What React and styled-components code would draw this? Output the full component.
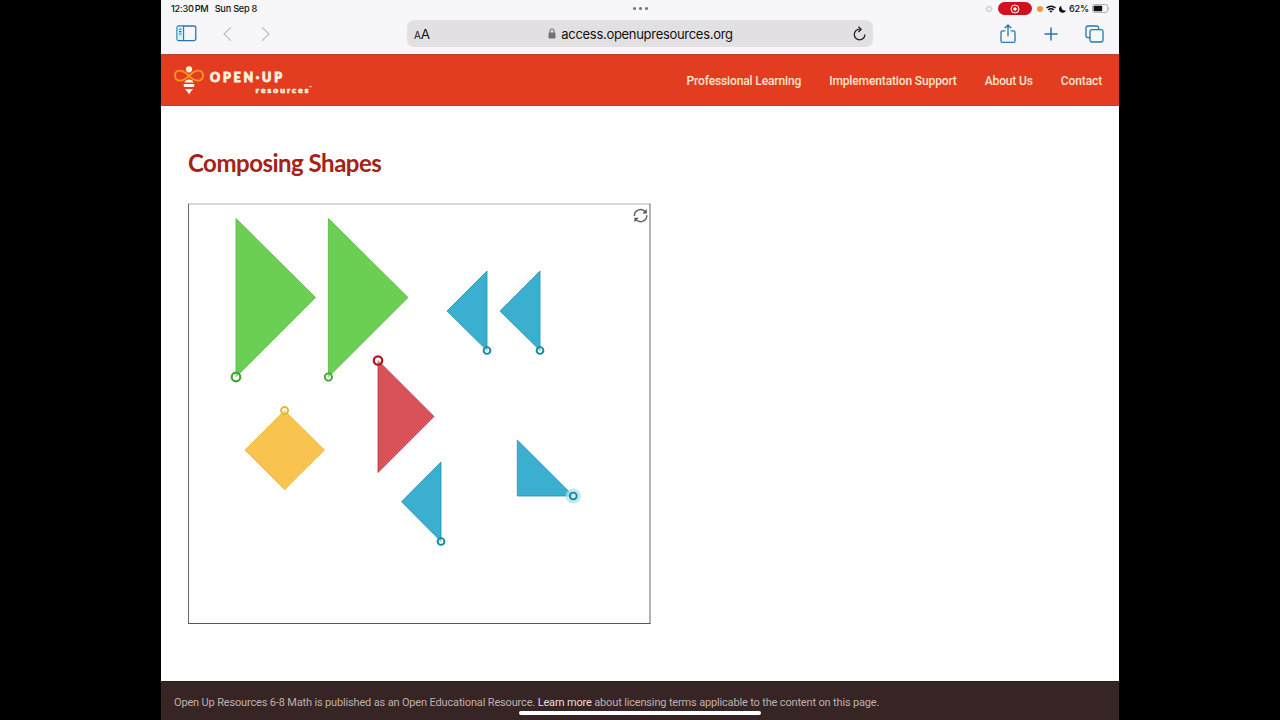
import React from 'react';
import styled, { createGlobalStyle } from 'styled-components';

const GlobalStyle = createGlobalStyle`
  * { box-sizing: border-box; }
  body { margin: 0; background: #000; overflow: hidden; }
  svg { display: block; flex: none; }
`;

const Letterbox = styled.div`
  display: flex;
  height: 720px;
  padding: 0 161px;
  background: #000;
`;

const Tablet = styled.div`
  display: flex;
  flex-direction: column;
  width: 958px;
  height: 720px;
  background: #fffefe;
  font-family: Roboto, "Liberation Sans", sans-serif;
`;

const Chrome = styled.div`
  height: 54px;
  background: #f7f6f9;
  color: #111;
  font-family: Inter, "Liberation Sans", sans-serif;
`;

const StatusBar = styled.div`
  display: grid;
  grid-template-columns: 1fr auto 1fr;
  align-items: center;
  height: 17px;
  padding: 0 9px 0 10px;
  font-size: 9.2px;
  font-weight: 500;
`;

const StatusGroup = styled.div`
  display: flex;
  align-items: center;
  gap: ${(p) => p.$gap || 0}px;
  justify-content: ${(p) => (p.$end ? 'flex-end' : 'flex-start')};
  white-space: nowrap;
  letter-spacing: ${(p) => p.$spacing || 0}px;
`;

const Clock = styled.span`
  margin-right: -0.8px;
  word-spacing: -1.2px;
`;

const Dots = styled.div`
  display: flex;
  gap: 3px;
`;

const Dot = styled.span`
  width: 3px;
  height: 3px;
  border-radius: 50%;
  background: #6f6e72;
`;

const RecordPill = styled.span`
  display: flex;
  align-items: center;
  justify-content: center;
  width: 34px;
  height: 13px;
  margin: 0 2px;
  border-radius: 7px;
  background: #d30f20;
`;

const MicDot = styled.span`
  width: 6px;
  height: 6px;
  border-radius: 50%;
  background: #e99a3b;
`;

const Toolbar = styled.div`
  display: grid;
  grid-template-columns: 246px 466px 1fr;
  align-items: center;
  height: 33px;
`;

const LeftTools = styled.div`
  display: flex;
  align-items: center;
  padding-left: 14.5px;
`;

const RightTools = styled.div`
  display: flex;
  align-items: center;
  justify-content: flex-end;
  gap: 27.5px;
  padding-right: 15px;
`;

const Arrow = styled.svg`
  margin-left: ${(p) => p.$left}px;
`;

const AddressBar = styled.div`
  display: grid;
  grid-template-columns: 30px 1fr 30px;
  align-items: center;
  height: 27px;
  padding: 0 6px 0 7px;
  border-radius: 7px;
  background: #e2e0e3;
`;

const TextSize = styled.span`
  padding-top: 1px;
  font-size: 13.5px;
  line-height: 20px;
  letter-spacing: -0.2px;
  small { font-size: 10px; }
`;

const Address = styled.span`
  display: flex;
  align-items: center;
  justify-content: center;
  gap: 5px;
  font-size: 13px;
  letter-spacing: -0.3px;
`;

const SiteHeader = styled.header`
  display: flex;
  align-items: center;
  justify-content: space-between;
  height: 52px;
  padding: 0 17px 0 13px;
  border-top: 1px solid #b9432b;
  border-bottom: 1px solid #cc3a1e;
  background: #e33c20;
`;

const Brand = styled.div`
  display: flex;
  align-items: center;
  gap: 6px;
  height: 50px;
`;

const Wordmark = styled.div`
  display: flex;
  flex-direction: column;
  width: 102px;
  padding-top: 5px;
  color: #fff3df;
  font-family: Lato, sans-serif;
  font-weight: 900;
`;

const BrandName = styled.span`
  font-size: 12.5px;
  line-height: 14px;
  letter-spacing: 2.75px;
  white-space: nowrap;
  -webkit-text-stroke: 0.9px #fff3df;
`;

const BrandSub = styled.span`
  align-self: flex-end;
  font-size: 8.2px;
  line-height: 10px;
  letter-spacing: 2.15px;
  white-space: nowrap;
  -webkit-text-stroke: 0.7px #fff3df;
  sup { margin-left: -1.5px; font-size: 4px; line-height: 0; letter-spacing: 0; -webkit-text-stroke: 0; }
`;

const Nav = styled.nav`
  display: flex;
  gap: 28px;
  padding-top: 2px;
`;

const NavLink = styled.a`
  color: #ffe6cf;
  font-size: 12px;
  font-weight: 500;
  letter-spacing: -0.13px;
  white-space: nowrap;
`;

const Main = styled.main`
  flex: 1;
  padding: 42px 27px 0;
`;

const Title = styled.h1`
  margin: 0 0 25px;
  color: #a32314;
  font-family: Lato, sans-serif;
  font-size: 24px;
  font-weight: 700;
  line-height: 30px;
  letter-spacing: -0.5px;
`;

const Board = styled.div`
  width: 463px;
  height: 421px;
`;

const Footer = styled.footer`
  position: relative;
  height: 39px;
  padding: 13px 13px 0;
  border-top: 1px solid #251c1b;
  background: #372526;
  color: #bfafae;
  font-size: 11px;
  line-height: 15px;
  letter-spacing: -0.16px;
  white-space: nowrap;
`;

const LearnMore = styled.a`
  color: #e9dddb;
`;

const HomeIndicator = styled.div`
  position: absolute;
  left: 358px;
  bottom: 5px;
  width: 242px;
  height: 4px;
  border-radius: 2px;
  background: #fff;
`;

const palette = {
  green: { fill: '#6bcf53', line: '#54b83e', ring: '#3fa52b' },
  blue: { fill: '#3aafd0', line: '#2794ac', ring: '#128a9c' },
  red: { fill: '#d95159', line: '#b1323f', ring: '#b01524' },
  yellow: { fill: '#f8c44f', line: '#eab43e', ring: '#e2b92f' },
};

const shapes = [
  { tone: 'green', points: '236,218.5 315.5,297.5 236,377', x: 236, y: 377, r: 4.3 },
  { tone: 'green', points: '328.4,218.5 408,297.5 328.4,377', x: 328.4, y: 377, r: 3.6 },
  { tone: 'blue', points: '487,271 447,311 487,350.5', x: 487, y: 350.5, r: 3.4 },
  { tone: 'blue', points: '540,271 500,311 540,350.5', x: 540, y: 350.5, r: 3.4 },
  { tone: 'red', points: '378,360.5 434,416.5 378,472.5', x: 378, y: 360.5, r: 4.2 },
  { tone: 'yellow', points: '284.6,410.5 324.5,450 284.6,489.7 245,450', x: 284.6, y: 410.5, r: 3.5 },
  { tone: 'blue', points: '441,462 401.5,501.7 441,541.5', x: 441, y: 541.5, r: 3.4 },
  { tone: 'blue', points: '517.3,440 573.5,496 517.3,496', x: 573.3, y: 496, r: 3.4, active: true },
];

function Piece({ tone, points, x, y, r, active }) {
  const c = palette[tone];
  return (
    <g>
      <polygon points={points} fill={c.fill} stroke={c.line} strokeWidth="0.8" />
      {active && <circle cx={x} cy={y} r="7.6" fill="#a9e3ec" fillOpacity="0.75" />}
      <circle cx={x} cy={y} r={r} fill="#fff" fillOpacity="0.35" stroke={c.ring} strokeWidth={r > 4 ? 2.2 : 1.9} />
    </g>
  );
}

function Canvas() {
  return (
    <svg width="463" height="421" viewBox="188 203 463 421">
      <path d="M188 204H650.5" stroke="#b0aeb6" strokeWidth="1.2" />
      <path d="M188.5 204V624M650 204V624" stroke="#69676d" />
      <path d="M188 623.5H650.5" stroke="#55535b" />
      {shapes.map((s) => <Piece key={s.points} {...s} />)}
      <g fill="none" stroke="#666" strokeWidth="1.5">
        <path d="M634.4 216a6.2 6.2 0 0 1 10.6-4.6M646.8 215.2a6.2 6.2 0 0 1-10.6 4.6" />
        <path d="M646.8 209v4.4h-4.4zM634.4 222.2v-4.4h4.4z" fill="#555" stroke="none" />
      </g>
    </svg>
  );
}

function SidebarIcon() {
  return (
    <svg width="21" height="17" viewBox="0 0 21 17" fill="none" stroke="#2278b0" strokeWidth="1.3">
      <rect x="1" y="1" width="18.8" height="14.6" rx="1.8" />
      <rect x="1.6" y="1.6" width="5.5" height="13.4" fill="#d2f0fb" stroke="none" />
      <path d="M7.6 1v14.6M3 4.2h2.5M3 6.6h2.5M3 9h2.5" strokeWidth="1.1" />
    </svg>
  );
}

function Chevron({ left, flip }) {
  return (
    <Arrow $left={left} width="9" height="16" viewBox="0 0 9 16" fill="none" stroke="#c3c1c6" strokeWidth="1.3">
      <path d={flip ? 'M1 1.3 8 8 1 14.7' : 'M8 1.3 1 8l7 6.7'} />
    </Arrow>
  );
}

function LockIcon() {
  return (
    <svg width="8" height="11" viewBox="0 0 8 11">
      <path d="M2 5V3a2 2 0 0 1 4 0v2" fill="none" stroke="#737176" strokeWidth="1.1" />
      <rect x="0.5" y="4.5" width="7" height="6" rx="1" fill="#737176" />
    </svg>
  );
}

function ReloadIcon() {
  return (
    <svg width="15" height="16" viewBox="0 0 15 16" fill="none" stroke="#222" strokeWidth="1.3">
      <path d="M8.6 3.2H7.6a5.3 5.3 0 1 0 5.3 5.3" />
      <path d="M6.4.6 9.1 3.2 6.4 6" />
    </svg>
  );
}

function ShareIcon() {
  return (
    <svg width="16" height="20" viewBox="0 0 16 20" fill="none" stroke="#2278b0" strokeWidth="1.3">
      <path d="M5.3 6.8H2.5a1.5 1.5 0 0 0-1.5 1.5v8.6a1.5 1.5 0 0 0 1.5 1.5h11a1.5 1.5 0 0 0 1.5-1.5V8.3a1.5 1.5 0 0 0-1.5-1.5h-2.8M8 12.3V1.2M4.8 4.2 8 1l3.2 3.2" />
    </svg>
  );
}

function PlusIcon() {
  return (
    <svg width="14" height="14" viewBox="0 0 14 14" stroke="#2278b0" strokeWidth="1.5">
      <path d="M7 .4v13.2M.4 7h13.2" />
    </svg>
  );
}

function TabsIcon() {
  return (
    <svg width="19" height="18" viewBox="0 0 19 18" fill="none" stroke="#2278b0" strokeWidth="1.3">
      <path d="M5 12.6H2.8A1.8 1.8 0 0 1 1 10.8V2.8A1.8 1.8 0 0 1 2.8 1h9a1.8 1.8 0 0 1 1.8 1.8V4.6" />
      <rect x="5" y="4.6" width="13" height="12.4" rx="1.8" />
    </svg>
  );
}

function Spinner() {
  return (
    <svg width="8" height="8" viewBox="0 0 8 8" stroke="#88868b" strokeWidth="0.7">
      <path d="M4 .6v1.8M4 5.6v1.8M.6 4h1.8M5.6 4h1.8M1.6 1.6l1.2 1.2M5.2 5.2l1.2 1.2M6.4 1.6 5.2 2.8M2.8 5.2 1.6 6.4" />
    </svg>
  );
}

function RecordIcon() {
  return (
    <svg width="10" height="10" viewBox="0 0 10 10">
      <circle cx="5" cy="5" r="4" fill="none" stroke="#fff" strokeWidth="1" />
      <circle cx="5" cy="5" r="1.8" fill="#fff" />
    </svg>
  );
}

function WifiIcon() {
  return (
    <svg width="10" height="8" viewBox="0 0 10 8" fill="none" stroke="#111" strokeWidth="1.5">
      <path d="M.5 3a6.4 6.4 0 0 1 9 0M2.2 5a4 4 0 0 1 5.6 0" />
      <path d="M5 7.8 3.5 6.2a2.2 2.2 0 0 1 3 0z" fill="#111" stroke="none" />
    </svg>
  );
}

function MoonIcon() {
  return (
    <svg width="7" height="8" viewBox="0 0 7 8">
      <path d="M2.3.8A3.6 3.6 0 1 0 6.9 5.4 3.8 3.8 0 0 1 2.3.8z" fill="#111" />
    </svg>
  );
}

function BatteryIcon() {
  return (
    <svg width="18" height="9" viewBox="0 0 18 9">
      <rect x="0.5" y="0.6" width="15.2" height="7.8" rx="2" fill="none" stroke="#a6a4a9" strokeWidth="0.9" />
      <rect x="1.6" y="1.7" width="8.6" height="5.6" rx="0.8" fill="#111" />
      <path d="M16.5 3.1q1.4 1.4 0 2.8z" fill="#99979c" />
    </svg>
  );
}

function BeeLogo() {
  return (
    <svg width="30" height="30" viewBox="0 0 30 30">
      <circle cx="15" cy="4.3" r="3.1" fill="#fff3df" />
      <path d="M15 10.8C11.5 7 8.5 5.6 5.3 5.6 2.6 5.6 1 7.8 1 10.6s1.7 5 4.3 5c3.2 0 6.2-1.3 9.7-4.8 3.5-3.5 6.5-5.2 9.7-5.2 2.6 0 4.3 2.2 4.3 5s-1.7 5-4.3 5c-3.2 0-6.2-1.1-9.7-4.8z" fill="none" stroke="#f79c1b" strokeWidth="1.9" />
      <path d="M10.4 17.5Q11.4 14.8 15 14.6q3.6.2 4.6 2.9zM9.7 19h10.6q.2 1.5-.3 2.9H10Q9.5 20.5 9.7 19zM11.1 24h7.8q-.6 1.4-1.9 2.3L15 29.4l-2-3.1Q11.7 25.4 11.1 24z" fill="#fff3df" />
    </svg>
  );
}

export default function App() {
  return (
    <>
      <GlobalStyle />
      <Letterbox>
        <Tablet>
          <Chrome>
            <StatusBar>
              <StatusGroup $gap={7} $spacing={-0.25}>
                <Clock>12:30 PM</Clock>
                <span>Sun Sep 8</span>
              </StatusGroup>
              <Dots><Dot /><Dot /><Dot /></Dots>
              <StatusGroup $end $gap={3} $spacing={-0.2}>
                <Spinner />
                <RecordPill><RecordIcon /></RecordPill>
                <MicDot />
                <WifiIcon />
                <MoonIcon />
                <span>62%</span>
                <BatteryIcon />
              </StatusGroup>
            </StatusBar>
            <Toolbar>
              <LeftTools>
                <SidebarIcon />
                <Chevron left={26} />
                <Chevron left={29} flip />
              </LeftTools>
              <AddressBar>
                <TextSize><small>A</small>A</TextSize>
                <Address><LockIcon />access.openupresources.org</Address>
                <StatusGroup $end><ReloadIcon /></StatusGroup>
              </AddressBar>
              <RightTools>
                <ShareIcon />
                <PlusIcon />
                <TabsIcon />
              </RightTools>
            </Toolbar>
          </Chrome>
          <SiteHeader>
            <Brand>
              <BeeLogo />
              <Wordmark>
                <BrandName>OPEN·UP</BrandName>
                <BrandSub>resources<sup>™</sup></BrandSub>
              </Wordmark>
            </Brand>
            <Nav>
              <NavLink>Professional Learning</NavLink>
              <NavLink>Implementation Support</NavLink>
              <NavLink>About Us</NavLink>
              <NavLink>Contact</NavLink>
            </Nav>
          </SiteHeader>
          <Main>
            <Title>Composing Shapes</Title>
            <Board><Canvas /></Board>
          </Main>
          <Footer>
            Open Up Resources 6-8 Math is published as an Open Educational Resource. <LearnMore>Learn more</LearnMore> about licensing terms applicable to the content on this page.
            <HomeIndicator />
          </Footer>
        </Tablet>
      </Letterbox>
    </>
  );
}
